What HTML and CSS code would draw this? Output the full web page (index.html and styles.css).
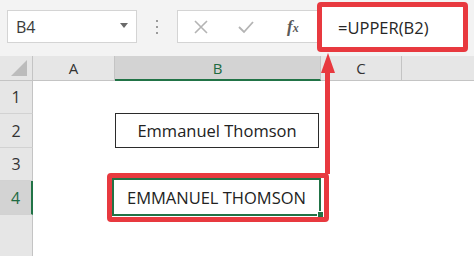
FILE: index.html
```html
<!DOCTYPE html>
<html lang="en">
<head>
    <meta charset="UTF-8">
    <title>UPPER function</title>
    <link rel="stylesheet" href="styles.css">
</head>
<body>
    <div class="sheet">
        <div class="toolbar">
            <div class="name-box">
                <span>B4</span>
                <span class="caret"></span>
            </div>
            <div class="grip"><i></i><i></i><i></i></div>
            <div class="fx-buttons">
                <svg class="btn-x" width="14" height="14" viewBox="0 0 14 14">
                    <path d="M1 1 L13 13 M13 1 L1 13" stroke="#b4b4b4" stroke-width="1.6" fill="none"/>
                </svg>
                <svg class="btn-ok" width="16" height="14" viewBox="0 0 16 14">
                    <path d="M1 7 L6 12 L15 2" stroke="#b4b4b4" stroke-width="1.8" fill="none"/>
                </svg>
                <span class="fx">f<small>x</small></span>
            </div>
            <div class="formula-input">=UPPER(B2)</div>
        </div>

        <div class="grid">
            <div class="corner">
                <svg width="16" height="16" viewBox="0 0 16 16"><polygon points="16,0 16,16 0,16" fill="#bcbcbc"/></svg>
            </div>
            <div class="col-head">A</div>
            <div class="col-head selected">B</div>
            <div class="col-head">C</div>
            <div class="col-head last"></div>

            <div class="row-head">1</div>
            <div class="cell"></div><div class="cell"></div><div class="cell"></div><div class="cell"></div>

            <div class="row-head">2</div>
            <div class="cell"></div><div class="cell boxed">Emmanuel Thomson</div><div class="cell"></div><div class="cell"></div>

            <div class="row-head">3</div>
            <div class="cell"></div><div class="cell"></div><div class="cell"></div><div class="cell"></div>

            <div class="row-head selected">4</div>
            <div class="cell"></div><div class="cell active">EMMANUEL THOMSON</div><div class="cell"></div><div class="cell"></div>

            <div class="row-head blank"></div>
            <div class="cell"></div><div class="cell"></div><div class="cell"></div><div class="cell"></div>
        </div>

        <!-- annotations -->
        <div class="callout"></div>
        <svg class="arrow" width="18" height="122" viewBox="0 0 18 122">
            <rect x="6" y="14" width="5" height="108" fill="#e8393f"/>
            <polygon points="2,21 9,1 16,21" fill="#e8393f"/>
        </svg>
    </div>
</body>
</html>
```

FILE: styles.css
```css
body {
    margin: 0;
    font-family: "Open Sans", "Liberation Sans", Arial, sans-serif;
    background-color: #ffffff;
}
.sheet {
    position: relative;
    width: 474px;
    height: 256px;
    overflow: hidden;
}
.toolbar {
    display: flex;
    align-items: flex-start;
    height: 56px;
    box-sizing: border-box;
    padding-top: 10px;
    padding-left: 7px;
    background-color: #f3f3f3;
}
.name-box {
    display: flex;
    align-items: center;
    justify-content: space-between;
    width: 130px;
    height: 33px;
    box-sizing: border-box;
    padding: 0 8px 0 8px;
    background-color: #ffffff;
    border: 1px solid #d4d4d4;
    font-size: 16px;
    color: #3a3a3a;
}
.caret {
    width: 0;
    height: 0;
    border-left: 4px solid transparent;
    border-right: 4px solid transparent;
    border-top: 5px solid #6a6a6a;
    margin-top: -2px;
}
.grip {
    display: flex;
    flex-direction: column;
    align-items: center;
    gap: 4px;
    width: 40px;
    padding-top: 10px;
}
.grip i {
    width: 2px;
    height: 2px;
    background-color: #9a9a9a;
}
.fx-buttons {
    display: flex;
    align-items: center;
    width: 140px;
    height: 33px;
    box-sizing: border-box;
    background-color: #ffffff;
    border: 1px solid #d4d4d4;
    border-right: none;
}
.btn-x {
    margin-left: 16px;
}
.btn-ok {
    margin-left: 30px;
}
.fx {
    margin-left: 33px;
    font-family: "Liberation Serif", "Times New Roman", serif;
    font-style: italic;
    font-weight: bold;
    font-size: 17px;
    color: #5a5a5a;
}
.fx small {
    font-size: 12px;
}
.formula-input {
    display: flex;
    align-items: center;
    width: 151px;
    height: 50px;
    box-sizing: border-box;
    margin-top: -8px;
    padding-left: 16px;
    background-color: #ffffff;
    border: 5px solid #e8393f;
    border-radius: 4px;
    font-size: 16.5px;
    color: #262626;
}
.grid {
    display: grid;
    grid-template-columns: 33px 82px 206px 81px 1fr;
    grid-template-rows: 25px 33px 34px 33px 34px 1fr;
    height: 200px;
}
.corner {
    display: flex;
    align-items: flex-end;
    justify-content: flex-end;
    padding: 0 5px 4px 0;
    background-color: #e6e6e6;
    border-right: 1px solid #c4c4c4;
    border-bottom: 1px solid #c4c4c4;
}
.col-head {
    display: flex;
    align-items: center;
    justify-content: center;
    background-color: #e6e6e6;
    border-right: 1px solid #c4c4c4;
    border-bottom: 1px solid #c4c4c4;
    font-size: 15px;
    color: #333333;
}
.col-head.selected {
    background-color: #d3d3d3;
    border-bottom: 2px solid #217346;
    color: #1e6b42;
}
.col-head.last {
    border-right: none;
}
.row-head {
    display: flex;
    align-items: center;
    justify-content: center;
    background-color: #e6e6e6;
    border-right: 1px solid #c4c4c4;
    border-bottom: 1px solid #d2d2d2;
    font-size: 16px;
    color: #333333;
}
.row-head.selected {
    background-color: #d3d3d3;
    border-right: 2px solid #217346;
    color: #1e6b42;
}
.row-head.blank {
    border-bottom: none;
}
.cell {
    display: flex;
    align-items: center;
    justify-content: center;
    font-size: 16.5px;
    color: #222222;
}
.cell.boxed {
    border: 1px solid #2b2b2b;
    margin: -1px 2px 0 0;
}
.cell.active {
    position: relative;
    outline: 2px solid #217346;
    outline-offset: -1px;
    margin: -2px 0 0 -2px;
    width: calc(100% + 1px);
}
.cell.active::after {
    content: "";
    position: absolute;
    right: -4px;
    bottom: -3px;
    width: 5px;
    height: 5px;
    background-color: #217346;
    border: 1px solid #ffffff;
}
.callout {
    position: absolute;
    left: 107px;
    top: 173px;
    width: 222px;
    height: 49px;
    box-sizing: border-box;
    border: 5px solid #e8393f;
    border-radius: 4px;
}
.arrow {
    position: absolute;
    left: 319px;
    top: 52px;
}
```
